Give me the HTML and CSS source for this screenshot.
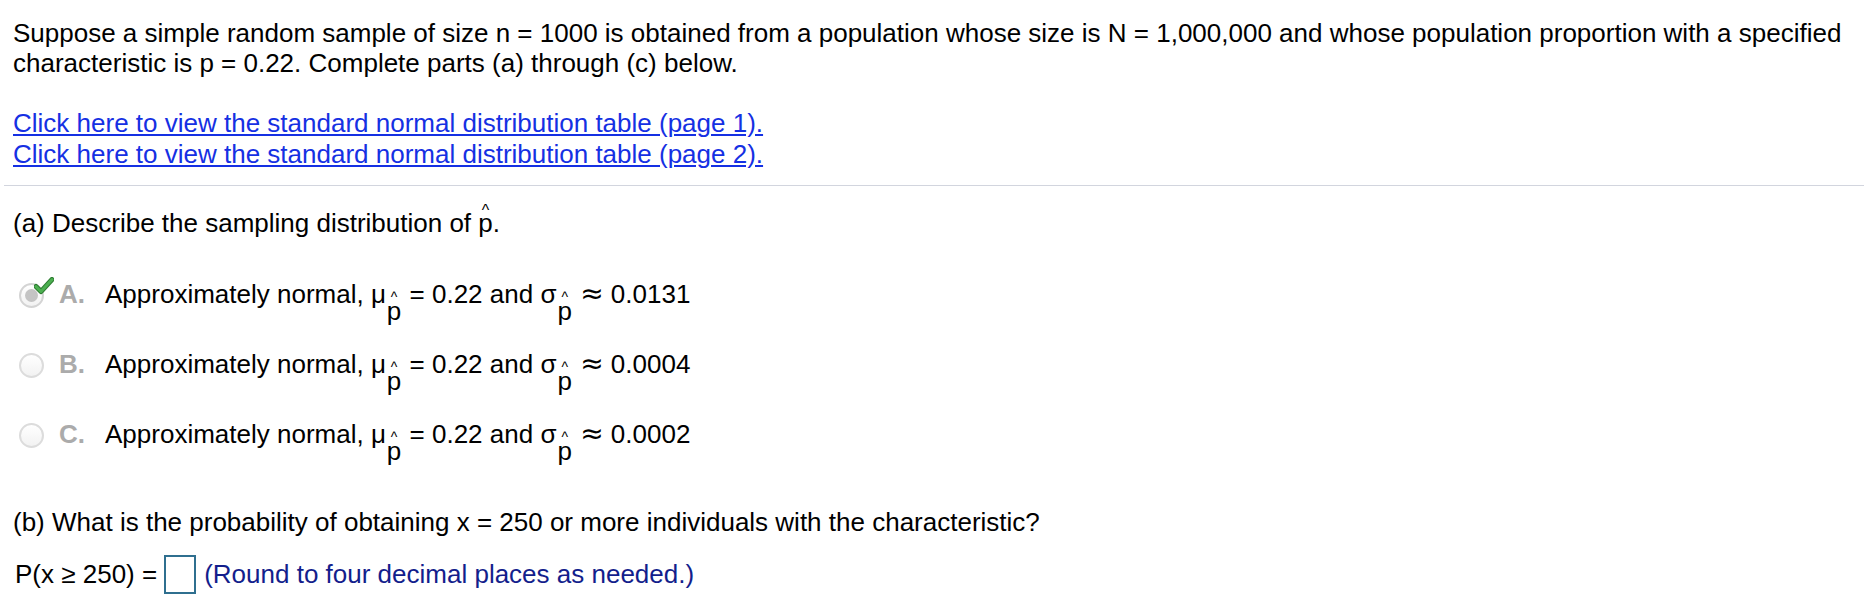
FILE: index.html
```html
<!DOCTYPE html>
<html lang="en">
<head>
    <meta charset="UTF-8">
    <title>Sampling distribution of p-hat</title>
    <link rel="stylesheet" href="styles.css">
</head>
<body>
    <div class="question">
        <p class="intro">Suppose a simple random sample of size n = 1000 is obtained from a population whose size is N = 1,000,000 and whose population proportion with a specified characteristic is p = 0.22. Complete parts (a) through (c) below.</p>

        <div class="links">
            <a href="#">Click here to view the standard normal distribution table (page 1).</a><br>
            <a href="#">Click here to view the standard normal distribution table (page 2).</a>
        </div>
    </div>

    <hr class="divider">

    <div class="question">
        <p class="part-a">(a) Describe the sampling distribution of <span class="phat"><span class="hat">^</span><span class="pp">p</span></span>.</p>

        <div class="choices">
            <div class="choice">
                <span class="radio checked">
                    <svg class="tick" viewBox="0 0 20 18" width="20" height="18">
                        <path d="M2 9.5 L7 14.5 L18 2.5" fill="none" stroke="#2e7d32" stroke-width="5" stroke-linecap="round" stroke-linejoin="round"/>
                        <path d="M2 9.5 L7 14.5 L18 2.5" fill="none" stroke="#4caf50" stroke-width="3" stroke-linecap="round" stroke-linejoin="round"/>
                    </svg>
                </span><span class="letter">A.</span>Approximately normal, μ<span class="sub"><span class="hat">^</span><span class="pp">p</span></span> = 0.22 and σ<span class="sub"><span class="hat">^</span><span class="pp">p</span></span> <span class="approx">≈</span> 0.0131
            </div>
            <div class="choice">
                <span class="radio"></span><span class="letter">B.</span>Approximately normal, μ<span class="sub"><span class="hat">^</span><span class="pp">p</span></span> = 0.22 and σ<span class="sub"><span class="hat">^</span><span class="pp">p</span></span> <span class="approx">≈</span> 0.0004
            </div>
            <div class="choice">
                <span class="radio"></span><span class="letter">C.</span>Approximately normal, μ<span class="sub"><span class="hat">^</span><span class="pp">p</span></span> = 0.22 and σ<span class="sub"><span class="hat">^</span><span class="pp">p</span></span> <span class="approx">≈</span> 0.0002
            </div>
        </div>

        <p class="part-b">(b) What is the probability of obtaining x = 250 or more individuals with the characteristic?</p>

        <p class="answer">P(x ≥ 250) =<span class="answer-box"></span><span class="hint">(Round to four decimal places as needed.)</span></p>
    </div>
</body>
</html>
```

FILE: styles.css
```css
* {
    box-sizing: border-box;
}

body {
    margin: 0;
    background: #fff;
    color: #000;
    font-family: "Liberation Sans", Arial, sans-serif;
    font-size: 26px;
    line-height: 30px;
}

p {
    margin: 0;
}

.question {
    padding: 0 13px;
}

.intro {
    padding-top: 18px;
}

.links {
    margin-top: 30px;
    line-height: 31px;
}

.links a {
    color: #1530e3;
    text-decoration: underline;
    text-underline-offset: 2px;
}

.divider {
    margin: 15px 0 0 4px;
    border: none;
    border-top: 1px solid #d2d5de;
}

.part-a {
    margin-top: 21px;
}

/* p with a hat above it */
.phat {
    display: inline-block;
    text-align: center;
    vertical-align: baseline;
}

.phat .hat {
    display: block;
    font-size: 16px;
    line-height: 8px;
    height: 8px;
}

.phat .pp {
    display: block;
    line-height: 16px;
}

.choices {
    margin-top: 21px;
}

.choice {
    line-height: 69px;
    white-space: nowrap;
}

.radio {
    display: inline-block;
    position: relative;
    width: 25px;
    height: 25px;
    margin-left: 6px;
    border: 2px solid #dcdcdc;
    border-radius: 50%;
    background: linear-gradient(#fff, #f2f2f2);
    vertical-align: -5px;
}

.radio.checked {
    border-color: #d4d4d4;
}

.radio.checked::after {
    content: "";
    position: absolute;
    left: 4px;
    top: 4px;
    width: 13px;
    height: 13px;
    border-radius: 50%;
    background: #c4c4c4;
}

.tick {
    position: absolute;
    left: 13px;
    top: -8px;
    z-index: 1;
}

.letter {
    display: inline-block;
    width: 61px;
    padding-left: 15px;
    color: #ababab;
    font-weight: bold;
}

/* subscript p-hat under mu / sigma */
.sub {
    display: inline-block;
    text-align: center;
    line-height: normal;
    vertical-align: -17px;
    margin: 0 1px;
}

.sub .hat {
    display: block;
    font-size: 14px;
    line-height: 10px;
    height: 10px;
}

.sub .pp {
    display: block;
    line-height: 18px;
}

.approx {
    font-family: "DejaVu Sans", sans-serif;
    font-size: 28px;
}

.part-b {
    margin-top: 38px;
}

.answer {
    margin-top: 18px;
    padding-left: 2px;
}

.answer-box {
    display: inline-block;
    width: 32px;
    height: 39px;
    margin: 0 8px 0 7px;
    border: 2px solid #2f6f8f;
    vertical-align: -11px;
}

.hint {
    color: #131e8c;
}
```
